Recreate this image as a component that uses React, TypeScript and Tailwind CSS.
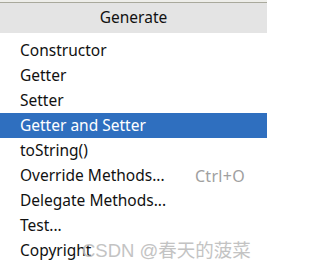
import React from "react";

const items: { label: string; shortcut?: string; selected?: boolean }[] = [
  { label: "Constructor" },
  { label: "Getter" },
  { label: "Setter" },
  { label: "Getter and Setter", selected: true },
  { label: "toString()" },
  { label: "Override Methods...", shortcut: "Ctrl+O" },
  { label: "Delegate Methods..." },
  { label: "Test..." },
  { label: "Copyright" },
];

export default function App() {
  return (
    <div
      className="relative w-[267px] h-[269px] bg-white overflow-hidden text-[15.5px] text-[#111111]"
      style={{ fontFamily: '"Noto Sans", "Noto Sans CJK SC", sans-serif' }}
    >
      <div className="h-[2px] bg-[#eeeeea]" />
      <div className="h-[1px] bg-[#a9a99c]" />
      <div className="h-[30px] bg-[#e4e4e4] flex items-center justify-center leading-none">
        Generate
      </div>
      <div className="pt-[5px] flex flex-col">
        {items.map((it) => (
          <div
            key={it.label}
            className={
              "h-[25px] flex items-center pl-[20px] pr-[22px] leading-none " +
              (it.selected ? "bg-[#2f6fbf] text-white" : "")
            }
          >
            <span className="flex-1 whitespace-nowrap">{it.label}</span>
            {it.shortcut && (
              <span className="text-[16px] tracking-[0.3px] text-[#a0a0a0]">{it.shortcut}</span>
            )}
          </div>
        ))}
      </div>
      <div
        className="absolute left-[82px] top-[242px] text-[18.5px] leading-none text-[#bdbdbd] opacity-90 whitespace-nowrap"
        style={{ fontFamily: '"Liberation Sans", "Noto Sans CJK SC", sans-serif' }}
      >
        CSDN @春天的菠菜
      </div>
    </div>
  );
}
